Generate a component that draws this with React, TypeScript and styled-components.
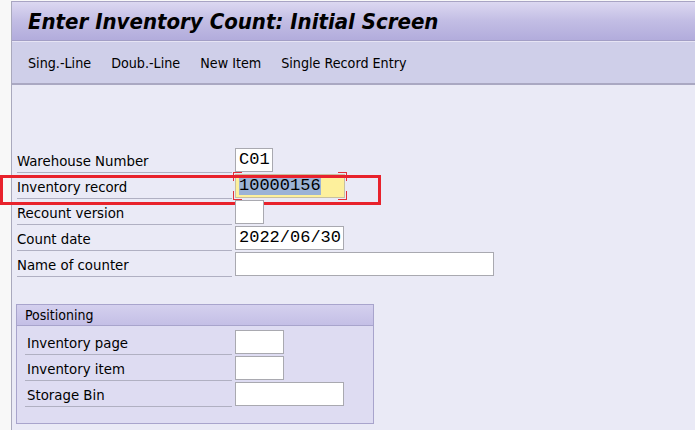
import styled, { createGlobalStyle } from 'styled-components';

const GlobalStyle = createGlobalStyle`
  html, body {
    margin: 0;
    padding: 0;
    background: #f8f8f8;
    overflow: hidden;
  }
  body {
    font-family: 'DejaVu Sans Condensed', 'DejaVu Sans', sans-serif;
    color: #000;
  }
`;

const Screen = styled.div`
  margin-left: 11px;
  border-left: 1px solid #a9a9bd;
  height: 430px;
  background: #eaeaf6;
`;

const TitleBar = styled.div`
  height: 38px;
  border-top: 1px solid #a8a4c4;
  border-bottom: 1px solid #a39fc6;
  background: linear-gradient(to bottom, #dcd8f1 0%, #c2bde4 50%, #b2acdc 100%);
  display: flex;
  align-items: center;
  padding-left: 16px;
  margin-top: 1px;
`;

const Title = styled.h1`
  margin: 0;
  font-family: 'DejaVu Sans Condensed', 'DejaVu Sans', sans-serif;
  font-size: 22px;
  font-weight: bold;
  font-style: italic;
  color: #000;
`;

const Toolbar = styled.div`
  height: 40px;
  border-top: 1px solid #e6e4f4;
  border-bottom: 2px solid #aaa8c2;
  background: #cfcfe9;
  display: flex;
  align-items: center;
  gap: 20px;
  padding: 1px 0 0 16px;
`;

const ToolButton = styled.span`
  font-size: 14.2px;
  color: #000;
  cursor: pointer;
`;

const Content = styled.div`
  padding: 63px 0 0 5px;
`;

const Row = styled.div<{ $indent?: number }>`
  position: relative;
  display: flex;
  align-items: flex-start;
  height: 26px;
  padding-left: ${(p) => p.$indent ?? 0}px;
`;

const Label = styled.div<{ $width: number; $pad?: number }>`
  width: ${(p) => p.$width}px;
  height: 25px;
  line-height: 25px;
  padding-left: ${(p) => p.$pad ?? 0}px;
  box-sizing: border-box;
  border-bottom: 1px solid #b0b0c2;
  font-size: 14.8px;
  white-space: nowrap;
`;

const Field = styled.div<{ $width: number; $focus?: boolean }>`
  position: relative;
  margin-left: 3px;
  width: ${(p) => p.$width}px;
  height: 24px;
  box-sizing: border-box;
  border: 1px solid ${(p) => (p.$focus ? '#c8c0a0' : '#a9a9b0')};
  background: ${(p) => (p.$focus ? '#fdf09c' : '#ffffff')};
  font-family: 'Liberation Mono', monospace;
  font-size: 17px;
  line-height: 22px;
  padding-left: 3px;
  white-space: nowrap;
`;

const Selected = styled.span`
  background: #9cb3d6;
`;

const Corner = styled.span<{ $v: 'top' | 'bottom'; $h: 'left' | 'right' }>`
  position: absolute;
  width: 8px;
  height: 8px;
  ${(p) => p.$v}: -3px;
  ${(p) => p.$h}: -3px;
  border-${(p) => p.$v}: 1px solid #e0303a;
  border-${(p) => p.$h}: 1px solid #e0303a;
`;

const Highlight = styled.div`
  position: absolute;
  left: -17px;
  top: 1px;
  width: 381px;
  height: 30px;
  box-sizing: border-box;
  border: 3px solid #e8222c;
  pointer-events: none;
`;

const GroupBox = styled.div`
  margin-top: 26px;
  margin-left: -1px;
  width: 358px;
  height: 120px;
  box-sizing: border-box;
  border: 1px solid #a8a4cc;
  background: #dedcf2;
`;

const GroupHeader = styled.div`
  height: 21px;
  box-sizing: border-box;
  border-bottom: 1px solid #a8a4cc;
  background: linear-gradient(to bottom, #d4d0ee 0%, #c4bfe6 100%);
  font-size: 14px;
  line-height: 20px;
  padding-left: 8px;
`;

const GroupBody = styled.div`
  padding-top: 4px;
`;

const mainRows = [
  { label: 'Warehouse Number', width: 38, value: 'C01' },
  { label: 'Inventory record', width: 110, value: '10000156', focus: true },
  { label: 'Recount version', width: 29, value: '' },
  { label: 'Count date', width: 109, value: '2022/06/30' },
  { label: 'Name of counter', width: 259, value: '' },
];

const positionRows = [
  { label: 'Inventory page', width: 49 },
  { label: 'Inventory item', width: 49 },
  { label: 'Storage Bin', width: 109 },
];

export default function App() {
  return (
    <>
      <GlobalStyle />
      <Screen>
        <TitleBar>
          <Title>Enter Inventory Count: Initial Screen</Title>
        </TitleBar>
        <Toolbar>
          <ToolButton>Sing.-Line</ToolButton>
          <ToolButton>Doub.-Line</ToolButton>
          <ToolButton>New Item</ToolButton>
          <ToolButton>Single Record Entry</ToolButton>
        </Toolbar>
        <Content>
          {mainRows.map((row) => (
            <Row key={row.label}>
              <Label $width={215}>{row.label}</Label>
              <Field $width={row.width} $focus={row.focus}>
                {row.focus ? <Selected>{row.value}</Selected> : row.value}
                {row.focus && (
                  <>
                    <Corner $v="top" $h="left" />
                    <Corner $v="top" $h="right" />
                    <Corner $v="bottom" $h="left" />
                    <Corner $v="bottom" $h="right" />
                  </>
                )}
              </Field>
              {row.focus && <Highlight />}
            </Row>
          ))}
          <GroupBox>
            <GroupHeader>Positioning</GroupHeader>
            <GroupBody>
              {positionRows.map((row) => (
                <Row key={row.label} $indent={8}>
                  <Label $width={207} $pad={2}>{row.label}</Label>
                  <Field $width={row.width} />
                </Row>
              ))}
            </GroupBody>
          </GroupBox>
        </Content>
      </Screen>
    </>
  );
}
